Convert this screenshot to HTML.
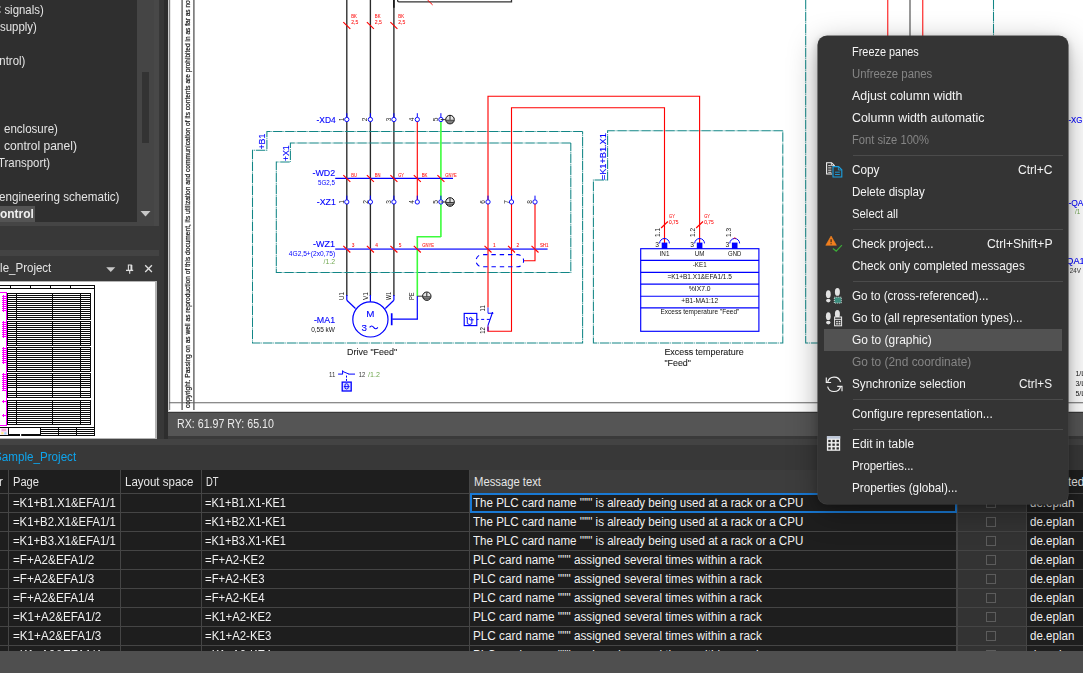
<!DOCTYPE html>
<html lang="en"><head><meta charset="utf-8"><title>EPLAN - Message management</title>
<style>
html,body{margin:0;padding:0;}
body{width:1083px;height:673px;overflow:hidden;position:relative;background:#383838;font-family:"Liberation Sans",sans-serif;}
.t{position:absolute;white-space:pre;transform-origin:0 0;font-family:"Liberation Sans",sans-serif;}
.a{position:absolute;}
svg{position:absolute;left:0;top:0;}
</style></head><body>
<div class="a" style="left:0px;top:0px;width:137px;height:222px;background:#2f2f2f;"></div>
<div class="a" style="left:137px;top:0px;width:17px;height:222px;background:#454545;"></div>
<div class="a" style="left:142.1px;top:72.1px;width:7px;height:70.7px;background:#333333;"></div>
<div class="a" style="left:0px;top:222px;width:159px;height:4px;background:#454545;"></div>
<div class="a" style="left:154px;top:0px;width:5px;height:226px;background:#484848;"></div>
<div class="a" style="left:0px;top:206px;width:35px;height:15.5px;background:#545454;"></div>
<svg class="a" style="left:139px;top:209px" width="13" height="9"><path d="M1.5 2 L11.5 2 L6.5 7.5 Z" fill="#c8c8c8"/></svg>
<div class="a" style="left:164px;top:0px;width:4px;height:439px;background:#2e2e2e;"></div>
<div class="a" style="left:0px;top:250.3px;width:159px;height:5.7px;background:#434343;"></div>
<div class="a" style="left:0px;top:280.6px;width:156.6px;height:158.2px;background:#b4b4b4;"></div>
<div class="a" style="left:0px;top:282px;width:154.5px;height:155.5px;background:#ffffff;"></div>
<div class="a" style="left:168px;top:0px;width:915px;height:412px;background:#d0d0d0;"></div>
<div class="a" style="left:169px;top:0px;width:914px;height:410.5px;background:#ffffff;"></div>
<div class="a" style="left:168px;top:412.5px;width:915px;height:23px;background:#555555;"></div>
<div class="a" style="left:164px;top:435.8px;width:919px;height:3.4px;background:#3a3a3a;"></div>
<div class="a" style="left:0px;top:439px;width:1083px;height:6.2px;background:#434343;"></div>
<div class="a" style="left:164px;top:435.8px;width:4px;height:3.2px;background:#2e2e2e;"></div>
<svg id="schematic" style="will-change:transform" width="1083" height="673" viewBox="0 0 1083 673" font-family="Liberation Sans, sans-serif"><defs><clipPath id="cv"><rect x="169" y="0" width="914" height="410.5"/></clipPath></defs>
<g clip-path="url(#cv)">
<line x1="169.6" y1="0" x2="169.6" y2="410" stroke="#8a8a8a" stroke-width="1.2" />
<line x1="182.1" y1="0" x2="182.1" y2="410" stroke="#555" stroke-width="1.3" />
<line x1="193.9" y1="0" x2="193.9" y2="410" stroke="#555" stroke-width="1.3" />
<line x1="169" y1="402.7" x2="1083" y2="402.7" stroke="#666" stroke-width="1.1" />
<text x="189.8" y="408" font-size="7.2" fill="#1a1a1a" textLength="439.2" lengthAdjust="spacingAndGlyphs" transform="rotate(-90 189.8 408)" stroke="#1a1a1a" stroke-width="0.22" >copyright. Passing on as well as reproduction of this document, its utilization and communication of its contents are prohibited in as far as not expressly</text>
<line x1="346.8" y1="0" x2="346.8" y2="296" stroke="#2a2a2a" stroke-width="1.35" />
<line x1="370.4" y1="0" x2="370.4" y2="296" stroke="#2a2a2a" stroke-width="1.35" />
<line x1="393.9" y1="0" x2="393.9" y2="296" stroke="#2a2a2a" stroke-width="1.35" />
<line x1="393.9" y1="0" x2="393.9" y2="7.8" stroke="#111" stroke-width="1.5" />
<path d="M397.6 0 V0.6 Q397.6 1.9 399 1.9 H511.5 V0" fill="none" stroke="#333" stroke-width="1.3"/>
<line x1="427.4" y1="-0.2" x2="432.6" y2="4.9" stroke="#ff0000" stroke-width="1.0" />
<line x1="343.3" y1="22.2" x2="350.3" y2="28.8" stroke="#ff0000" stroke-width="1.15" />
<text x="351.2" y="17.6" font-size="4.8" fill="#ff1010" textLength="5.7" lengthAdjust="spacingAndGlyphs" stroke="#ff1010" stroke-width="0.08" >BK</text>
<text x="351.2" y="23.8" font-size="4.8" fill="#ff1010" textLength="7" lengthAdjust="spacingAndGlyphs" stroke="#ff1010" stroke-width="0.08" >2,5</text>
<line x1="366.9" y1="22.2" x2="373.9" y2="28.8" stroke="#ff0000" stroke-width="1.15" />
<text x="374.79999999999995" y="17.6" font-size="4.8" fill="#ff1010" textLength="5.7" lengthAdjust="spacingAndGlyphs" stroke="#ff1010" stroke-width="0.08" >BK</text>
<text x="374.79999999999995" y="23.8" font-size="4.8" fill="#ff1010" textLength="7" lengthAdjust="spacingAndGlyphs" stroke="#ff1010" stroke-width="0.08" >2,5</text>
<line x1="390.4" y1="22.2" x2="397.4" y2="28.8" stroke="#ff0000" stroke-width="1.15" />
<text x="398.29999999999995" y="17.6" font-size="4.8" fill="#ff1010" textLength="5.7" lengthAdjust="spacingAndGlyphs" stroke="#ff1010" stroke-width="0.08" >BK</text>
<text x="398.29999999999995" y="23.8" font-size="4.8" fill="#ff1010" textLength="7" lengthAdjust="spacingAndGlyphs" stroke="#ff1010" stroke-width="0.08" >2,5</text>
<polyline points="582.6,131.5 266.9,131.5 266.9,150.2 252.5,150.2 252.5,342.9 582.6,342.9 582.6,131.5" fill="none" stroke="#128686" stroke-width="1.05" stroke-dasharray="9.5 0.85 0.8 0.85"/>
<polyline points="570.8,143 290.4,143 290.4,161.9 276.3,161.9 276.3,272.5 570.8,272.5 570.8,143" fill="none" stroke="#128686" stroke-width="1.05" stroke-dasharray="9.5 0.85 0.8 0.85"/>
<polyline points="782.8,130.8 607.6,130.8 607.6,180 593.4,180 593.4,342.9 782.8,342.9 782.8,130.8" fill="none" stroke="#128686" stroke-width="1.05" stroke-dasharray="9.5 0.85 0.8 0.85"/>
<polyline points="805.7,0 805.7,342.9 830,342.9" fill="none" stroke="#128686" stroke-width="1.05" stroke-dasharray="9.5 0.85 0.8 0.85"/>
<line x1="993.5" y1="0" x2="993.5" y2="40" stroke="#128686" stroke-width="1.05" stroke-dasharray="9.5 0.85 0.8 0.85"/>
<text x="265.2" y="149.6" font-size="9.6" fill="#0000ff" textLength="16" lengthAdjust="spacingAndGlyphs" transform="rotate(-90 265.2 149.6)" stroke="#0000ff" stroke-width="0.12" >+B1</text>
<text x="289" y="161.2" font-size="9.6" fill="#0000ff" textLength="16" lengthAdjust="spacingAndGlyphs" transform="rotate(-90 289 161.2)" stroke="#0000ff" stroke-width="0.12" >+X1</text>
<text x="606" y="180.2" font-size="9.6" fill="#0000ff" textLength="47" lengthAdjust="spacingAndGlyphs" transform="rotate(-90 606 180.2)" stroke="#0000ff" stroke-width="0.12" >=K1+B1.X1</text>
<line x1="887.7" y1="0" x2="887.7" y2="40" stroke="#ff4848" stroke-width="1.4" />
<line x1="922.7" y1="0" x2="922.7" y2="40" stroke="#ff4848" stroke-width="1.4" />
<line x1="910" y1="0" x2="910" y2="40" stroke="#444" stroke-width="1.1" />
<line x1="417.3" y1="119.5" x2="417.3" y2="201.5" stroke="#ff0000" stroke-width="1.12" />
<line x1="440.9" y1="119.5" x2="440.9" y2="237" stroke="#3cfc3c" stroke-width="1.6" />
<polyline points="440.9,236.8 417.3,236.8 417.3,296" fill="none" stroke="#3cfc3c" stroke-width="1.6" />
<polyline points="488.0,201.5 488.0,96.2 699.6,96.2 699.6,243" fill="none" stroke="#ff0000" stroke-width="1.12" />
<polyline points="511.5,201.5 511.5,107.7 664.5,107.7 664.5,243" fill="none" stroke="#ff0000" stroke-width="1.12" />
<line x1="488.0" y1="201.5" x2="488.0" y2="307.5" stroke="#ff0000" stroke-width="1.12" />
<polyline points="488.0,327 488.0,331.2 511.5,331.2 511.5,201.5" fill="none" stroke="#ff0000" stroke-width="1.12" />
<polyline points="535.0,201.5 535.0,260.7 523.3,260.7" fill="none" stroke="#ff0000" stroke-width="1.12" />
<text x="316.5" y="122.9" font-size="9.4" fill="#0000ff" textLength="19.2" lengthAdjust="spacingAndGlyphs" stroke="#0000ff" stroke-width="0.12" >-XD4</text>
<line x1="346.8" y1="113.2" x2="346.8" y2="117.2" stroke="#0000ff" stroke-width="1.0" />
<circle cx="346.8" cy="119.5" r="2.15" fill="#fff" stroke="#0000ff" stroke-width="0.95"/>
<text x="343.90000000000003" y="121.3" font-size="6.6" fill="#1a1a1a" transform="rotate(-90 343.90000000000003 121.3)" >1</text>
<line x1="370.4" y1="113.2" x2="370.4" y2="117.2" stroke="#0000ff" stroke-width="1.0" />
<circle cx="370.4" cy="119.5" r="2.15" fill="#fff" stroke="#0000ff" stroke-width="0.95"/>
<text x="367.5" y="121.3" font-size="6.6" fill="#1a1a1a" transform="rotate(-90 367.5 121.3)" >2</text>
<line x1="393.9" y1="113.2" x2="393.9" y2="117.2" stroke="#0000ff" stroke-width="1.0" />
<circle cx="393.9" cy="119.5" r="2.15" fill="#fff" stroke="#0000ff" stroke-width="0.95"/>
<text x="391.0" y="121.3" font-size="6.6" fill="#1a1a1a" transform="rotate(-90 391.0 121.3)" >3</text>
<line x1="417.3" y1="113.2" x2="417.3" y2="117.2" stroke="#0000ff" stroke-width="1.0" />
<circle cx="417.3" cy="119.5" r="2.15" fill="#fff" stroke="#0000ff" stroke-width="0.95"/>
<text x="414.40000000000003" y="121.3" font-size="6.6" fill="#1a1a1a" transform="rotate(-90 414.40000000000003 121.3)" >4</text>
<line x1="440.9" y1="113.2" x2="440.9" y2="117.2" stroke="#0000ff" stroke-width="1.0" />
<circle cx="440.9" cy="119.5" r="2.15" fill="#fff" stroke="#0000ff" stroke-width="0.95"/>
<text x="438.0" y="121.3" font-size="6.6" fill="#1a1a1a" transform="rotate(-90 438.0 121.3)" >5</text>
<line x1="440.7" y1="119.6" x2="445.7" y2="119.6" stroke="#222" stroke-width="0.9" />
<circle cx="450" cy="119.6" r="4.3" fill="#e4e4e4" stroke="#0a0a0a" stroke-width="1"/>
<path d="M446.0 119.69999999999999 A4.0 4.0 0 0 0 454.0 119.69999999999999 Z" fill="#3a3a3a"/>
<line x1="450" y1="115.89999999999999" x2="450" y2="119.8" stroke="#111" stroke-width="0.9" />
<line x1="446.9" y1="121.19999999999999" x2="453.1" y2="121.19999999999999" stroke="#ddd" stroke-width="0.6" />
<line x1="447.9" y1="122.6" x2="452.1" y2="122.6" stroke="#ddd" stroke-width="0.5" />
<text x="312.5" y="176.2" font-size="9.4" fill="#0000ff" textLength="22.6" lengthAdjust="spacingAndGlyphs" stroke="#0000ff" stroke-width="0.12" >-WD2</text>
<text x="318" y="185.2" font-size="6.8" fill="#0000ff" textLength="17" lengthAdjust="spacingAndGlyphs" >5G2,5</text>
<line x1="335.2" y1="178.4" x2="453" y2="178.4" stroke="#0000ff" stroke-width="1.25" />
<line x1="343.3" y1="175.1" x2="350.3" y2="181.8" stroke="#ff0000" stroke-width="1.15" />
<text x="351.2" y="176.7" font-size="4.8" fill="#ff1010" textLength="5.7" lengthAdjust="spacingAndGlyphs" stroke="#ff1010" stroke-width="0.08" >BU</text>
<line x1="366.9" y1="175.1" x2="373.9" y2="181.8" stroke="#ff0000" stroke-width="1.15" />
<text x="374.79999999999995" y="176.7" font-size="4.8" fill="#ff1010" textLength="5.7" lengthAdjust="spacingAndGlyphs" stroke="#ff1010" stroke-width="0.08" >BN</text>
<line x1="390.4" y1="175.1" x2="397.4" y2="181.8" stroke="#ff0000" stroke-width="1.15" />
<text x="398.29999999999995" y="176.7" font-size="4.8" fill="#ff1010" textLength="5.7" lengthAdjust="spacingAndGlyphs" stroke="#ff1010" stroke-width="0.08" >GY</text>
<line x1="413.8" y1="175.1" x2="420.8" y2="181.8" stroke="#ff0000" stroke-width="1.15" />
<text x="421.7" y="176.7" font-size="4.8" fill="#ff1010" textLength="5.7" lengthAdjust="spacingAndGlyphs" stroke="#ff1010" stroke-width="0.08" >BK</text>
<line x1="437.4" y1="175.1" x2="444.4" y2="181.8" stroke="#ff0000" stroke-width="1.15" />
<text x="445.29999999999995" y="176.7" font-size="4.8" fill="#ff1010" textLength="11.5" lengthAdjust="spacingAndGlyphs" stroke="#ff1010" stroke-width="0.08" >GNYE</text>
<text x="316.8" y="205" font-size="9.4" fill="#0000ff" textLength="19" lengthAdjust="spacingAndGlyphs" stroke="#0000ff" stroke-width="0.12" >-XZ1</text>
<line x1="346.8" y1="195.64999999999998" x2="346.8" y2="199.64999999999998" stroke="#0000ff" stroke-width="1.0" />
<circle cx="346.8" cy="201.95" r="2.15" fill="#fff" stroke="#0000ff" stroke-width="0.95"/>
<text x="343.90000000000003" y="203.75" font-size="6.6" fill="#1a1a1a" transform="rotate(-90 343.90000000000003 203.75)" >1</text>
<line x1="370.4" y1="195.64999999999998" x2="370.4" y2="199.64999999999998" stroke="#0000ff" stroke-width="1.0" />
<circle cx="370.4" cy="201.95" r="2.15" fill="#fff" stroke="#0000ff" stroke-width="0.95"/>
<text x="367.5" y="203.75" font-size="6.6" fill="#1a1a1a" transform="rotate(-90 367.5 203.75)" >2</text>
<line x1="393.9" y1="195.64999999999998" x2="393.9" y2="199.64999999999998" stroke="#0000ff" stroke-width="1.0" />
<circle cx="393.9" cy="201.95" r="2.15" fill="#fff" stroke="#0000ff" stroke-width="0.95"/>
<text x="391.0" y="203.75" font-size="6.6" fill="#1a1a1a" transform="rotate(-90 391.0 203.75)" >3</text>
<line x1="417.3" y1="195.64999999999998" x2="417.3" y2="199.64999999999998" stroke="#0000ff" stroke-width="1.0" />
<circle cx="417.3" cy="201.95" r="2.15" fill="#fff" stroke="#0000ff" stroke-width="0.95"/>
<text x="414.40000000000003" y="203.75" font-size="6.6" fill="#1a1a1a" transform="rotate(-90 414.40000000000003 203.75)" >4</text>
<line x1="440.9" y1="195.64999999999998" x2="440.9" y2="199.64999999999998" stroke="#0000ff" stroke-width="1.0" />
<circle cx="440.9" cy="201.95" r="2.15" fill="#fff" stroke="#0000ff" stroke-width="0.95"/>
<text x="438.0" y="203.75" font-size="6.6" fill="#1a1a1a" transform="rotate(-90 438.0 203.75)" >5</text>
<line x1="440.7" y1="202" x2="445.7" y2="202" stroke="#222" stroke-width="0.9" />
<circle cx="450" cy="202" r="4.3" fill="#e4e4e4" stroke="#0a0a0a" stroke-width="1"/>
<path d="M446.0 202.1 A4.0 4.0 0 0 0 454.0 202.1 Z" fill="#3a3a3a"/>
<line x1="450" y1="198.29999999999998" x2="450" y2="202.2" stroke="#111" stroke-width="0.9" />
<line x1="446.9" y1="203.6" x2="453.1" y2="203.6" stroke="#ddd" stroke-width="0.6" />
<line x1="447.9" y1="205" x2="452.1" y2="205" stroke="#ddd" stroke-width="0.5" />
<line x1="488.0" y1="195.64999999999998" x2="488.0" y2="199.64999999999998" stroke="#0000ff" stroke-width="1.0" />
<circle cx="488.0" cy="201.95" r="2.15" fill="#fff" stroke="#0000ff" stroke-width="0.95"/>
<text x="485.1" y="203.75" font-size="6.6" fill="#1a1a1a" transform="rotate(-90 485.1 203.75)" >6</text>
<line x1="511.5" y1="195.64999999999998" x2="511.5" y2="199.64999999999998" stroke="#0000ff" stroke-width="1.0" />
<circle cx="511.5" cy="201.95" r="2.15" fill="#fff" stroke="#0000ff" stroke-width="0.95"/>
<text x="508.6" y="203.75" font-size="6.6" fill="#1a1a1a" transform="rotate(-90 508.6 203.75)" >7</text>
<line x1="535.0" y1="195.64999999999998" x2="535.0" y2="199.64999999999998" stroke="#0000ff" stroke-width="1.0" />
<circle cx="535.0" cy="201.95" r="2.15" fill="#fff" stroke="#0000ff" stroke-width="0.95"/>
<text x="532.1" y="203.75" font-size="6.6" fill="#1a1a1a" transform="rotate(-90 532.1 203.75)" >8</text>
<text x="313" y="247.3" font-size="9.4" fill="#0000ff" textLength="22" lengthAdjust="spacingAndGlyphs" stroke="#0000ff" stroke-width="0.12" >-WZ1</text>
<text x="288.8" y="256.2" font-size="6.8" fill="#0000ff" textLength="46.3" lengthAdjust="spacingAndGlyphs" >4G2,5+(2x0,75)</text>
<text x="323.6" y="263.5" font-size="7" fill="#70a850" textLength="11.5" lengthAdjust="spacingAndGlyphs" >/1.2</text>
<line x1="335.2" y1="249.1" x2="547.6" y2="249.1" stroke="#5555ff" stroke-width="1.8" />
<line x1="343.3" y1="245.8" x2="350.3" y2="252.5" stroke="#ff0000" stroke-width="1.15" />
<text x="351.7" y="246.9" font-size="4.8" fill="#ff1010" stroke="#ff1010" stroke-width="0.08" >3</text>
<line x1="366.9" y1="245.8" x2="373.9" y2="252.5" stroke="#ff0000" stroke-width="1.15" />
<text x="375.29999999999995" y="246.9" font-size="4.8" fill="#ff1010" stroke="#ff1010" stroke-width="0.08" >4</text>
<line x1="390.4" y1="245.8" x2="397.4" y2="252.5" stroke="#ff0000" stroke-width="1.15" />
<text x="398.79999999999995" y="246.9" font-size="4.8" fill="#ff1010" stroke="#ff1010" stroke-width="0.08" >5</text>
<line x1="413.8" y1="245.8" x2="420.8" y2="252.5" stroke="#ff0000" stroke-width="1.15" />
<text x="422.2" y="246.9" font-size="4.8" fill="#ff1010" textLength="11.8" lengthAdjust="spacingAndGlyphs" stroke="#ff1010" stroke-width="0.08" >GNYE</text>
<line x1="484.5" y1="245.8" x2="491.5" y2="252.5" stroke="#ff0000" stroke-width="1.15" />
<text x="492.9" y="246.9" font-size="4.8" fill="#ff1010" stroke="#ff1010" stroke-width="0.08" >1</text>
<line x1="508.0" y1="245.8" x2="515.0" y2="252.5" stroke="#ff0000" stroke-width="1.15" />
<text x="516.4" y="246.9" font-size="4.8" fill="#ff1010" stroke="#ff1010" stroke-width="0.08" >2</text>
<line x1="531.5" y1="245.8" x2="538.5" y2="252.5" stroke="#ff0000" stroke-width="1.15" />
<text x="539.9" y="246.9" font-size="4.8" fill="#ff1010" textLength="8.6" lengthAdjust="spacingAndGlyphs" stroke="#ff1010" stroke-width="0.08" >SH1</text>
<rect x="476" y="254.6" width="47.6" height="12.2" rx="6.1" fill="none" stroke="#0000ff" stroke-width="1.05" stroke-dasharray="4.4 3.9" stroke-dashoffset="-1"/>
<text x="344.1" y="300" font-size="7" fill="#141414" textLength="8" lengthAdjust="spacingAndGlyphs" transform="rotate(-90 344.1 300)" >U1</text>
<text x="367.7" y="300" font-size="7" fill="#141414" textLength="8" lengthAdjust="spacingAndGlyphs" transform="rotate(-90 367.7 300)" >V1</text>
<text x="391.2" y="300" font-size="7" fill="#141414" textLength="8" lengthAdjust="spacingAndGlyphs" transform="rotate(-90 391.2 300)" >W1</text>
<line x1="346.8" y1="295" x2="346.8" y2="300.3" stroke="#0000ff" stroke-width="1.2" />
<line x1="346.8" y1="300.3" x2="355.5" y2="308.5" stroke="#0000ff" stroke-width="1.2" />
<line x1="370.4" y1="295" x2="370.4" y2="302" stroke="#0000ff" stroke-width="1.2" />
<line x1="393.9" y1="295" x2="393.9" y2="300.3" stroke="#0000ff" stroke-width="1.2" />
<line x1="393.9" y1="300.3" x2="385.3" y2="308.5" stroke="#0000ff" stroke-width="1.2" />
<circle cx="370.4" cy="319.4" r="17.6" fill="#fff" stroke="#0000ff" stroke-width="1.2"/>
<text x="370.4" y="316.7" font-size="9.8" fill="#0000ff" text-anchor="middle" stroke="#0000ff" stroke-width="0.1" >M</text>
<text x="364.2" y="330.9" font-size="9.8" fill="#0000ff" text-anchor="middle" stroke="#0000ff" stroke-width="0.1" >3</text>
<path d="M369.6 327.4 q2 -2.8 4.1 0 t4.1 0" fill="none" stroke="#0000ff" stroke-width="1.1"/>
<text x="414" y="300.1" font-size="7" fill="#141414" textLength="7.6" lengthAdjust="spacingAndGlyphs" transform="rotate(-90 414 300.1)" >PE</text>
<line x1="417.3" y1="296" x2="417.3" y2="319.2" stroke="#0000ff" stroke-width="1.2" />
<line x1="417.6" y1="296.2" x2="422.6" y2="296.2" stroke="#222" stroke-width="0.9" />
<circle cx="426.8" cy="296.2" r="4.2" fill="#e4e4e4" stroke="#0a0a0a" stroke-width="1"/>
<path d="M422.90000000000003 296.3 A3.9000000000000004 3.9000000000000004 0 0 0 430.7 296.3 Z" fill="#3a3a3a"/>
<line x1="426.8" y1="292.6" x2="426.8" y2="296.4" stroke="#111" stroke-width="0.9" />
<line x1="423.8" y1="297.8" x2="429.8" y2="297.8" stroke="#ddd" stroke-width="0.6" />
<line x1="424.8" y1="299.2" x2="428.8" y2="299.2" stroke="#ddd" stroke-width="0.5" />
<line x1="392.3" y1="319.2" x2="417.9" y2="319.2" stroke="#0000ff" stroke-width="1.2" />
<line x1="391.7" y1="313.2" x2="391.7" y2="325.2" stroke="#0000ff" stroke-width="1.7" />
<text x="313.9" y="322.6" font-size="9.4" fill="#0000ff" textLength="21.2" lengthAdjust="spacingAndGlyphs" stroke="#0000ff" stroke-width="0.12" >-MA1</text>
<text x="311.2" y="331.9" font-size="7.2" fill="#141414" textLength="23.8" lengthAdjust="spacingAndGlyphs" >0,55 kW</text>
<text x="347.1" y="354.7" font-size="9.2" fill="#1c1c1c" textLength="50.1" lengthAdjust="spacingAndGlyphs" stroke="#1c1c1c" stroke-width="0.1" >Drive &quot;Feed&quot;</text>
<text x="329" y="376.9" font-size="6.4" fill="#333" textLength="6.3" lengthAdjust="spacingAndGlyphs" >11</text>
<text x="358.8" y="376.9" font-size="6.4" fill="#333" textLength="6.5" lengthAdjust="spacingAndGlyphs" >12</text>
<text x="368.1" y="376.9" font-size="6.4" fill="#70a850" textLength="11.9" lengthAdjust="spacingAndGlyphs" >/1.2</text>
<line x1="338.1" y1="374.1" x2="342.8" y2="374.1" stroke="#0000ff" stroke-width="1.0" />
<line x1="342.6" y1="370.4" x2="342.6" y2="374.1" stroke="#0000ff" stroke-width="1.0" />
<line x1="342.6" y1="371.4" x2="349" y2="374.1" stroke="#0000ff" stroke-width="1.0" />
<line x1="348.6" y1="374.1" x2="355" y2="374.1" stroke="#0000ff" stroke-width="1.0" />
<line x1="346.5" y1="375.6" x2="346.5" y2="382" stroke="#0000ff" stroke-width="1.0" stroke-dasharray="2 1.3"/>
<rect x="342.2" y="382.1" width="9" height="8.9" fill="#dfe0ff" stroke="#0000ff" stroke-width="1.3"/>
<path d="M343.8 386.6 h5.8 M345 384.3 q1.8 -1.3 3.2 0.2 v3.8 q-1.6 1.5 -3.2 0 z" fill="none" stroke="#0000ff" stroke-width="0.9"/>
<rect x="464.2" y="313.4" width="12.6" height="12.2" fill="#fff" stroke="#0000ff" stroke-width="1.15"/>
<path d="M466 317.6 h1.3 v6 q2.4 2 4.6 0 v-5.4 q-1.4 -1.6 -2.6 0 q-0.5 1.4 1.2 1.6 h3.2" fill="none" stroke="#0000ff" stroke-width="0.95"/>
<line x1="477" y1="319.4" x2="490" y2="319.4" stroke="#0000ff" stroke-width="1.0" stroke-dasharray="1.6 2.6 3 2.6 3 9"/>
<text x="485.4" y="311.4" font-size="7" fill="#141414" textLength="6.4" lengthAdjust="spacingAndGlyphs" transform="rotate(-90 485.4 311.4)" >11</text>
<text x="485.4" y="333.8" font-size="7" fill="#141414" textLength="6.8" lengthAdjust="spacingAndGlyphs" transform="rotate(-90 485.4 333.8)" >12</text>
<line x1="488.0" y1="307.5" x2="488.0" y2="313.3" stroke="#5050ff" stroke-width="1.3" />
<polyline points="488.0,313.3 493.4,313.3" fill="none" stroke="#0000ff" stroke-width="1.1" />
<line x1="492.4" y1="312" x2="492.4" y2="313.6" stroke="#0000ff" stroke-width="1.1" />
<line x1="492.5" y1="312.5" x2="487.9" y2="325.6" stroke="#0000ff" stroke-width="1.1" />
<line x1="488.0" y1="325.4" x2="488.0" y2="331.2" stroke="#6010c0" stroke-width="1.3" />
<rect x="640.7" y="248.7" width="118.2" height="82.6" fill="#fff" stroke="#0000ff" stroke-width="1.15"/>
<line x1="640.7" y1="260.3" x2="758.9" y2="260.3" stroke="#0000ff" stroke-width="1.15" />
<line x1="640.7" y1="272.3" x2="758.9" y2="272.3" stroke="#0000ff" stroke-width="1.15" />
<line x1="640.7" y1="284.1" x2="758.9" y2="284.1" stroke="#0000ff" stroke-width="1.15" />
<line x1="640.7" y1="296.2" x2="758.9" y2="296.2" stroke="#0000ff" stroke-width="1.15" />
<line x1="640.7" y1="307.9" x2="758.9" y2="307.9" stroke="#0000ff" stroke-width="1.15" />
<rect x="661.7" y="242.6" width="5.6" height="6.2" fill="#0000ff"/>
<path d="M659.6 243.4 a4.9 4.9 0 0 1 9.8 0" fill="none" stroke="#0000ff" stroke-width="1"/>
<text x="664.5" y="256.2" font-size="6.7" fill="#141414" text-anchor="middle" textLength="9.9" lengthAdjust="spacingAndGlyphs" >IN1</text>
<text x="657.1" y="247.4" font-size="6.7" fill="#141414" text-anchor="middle" >3</text>
<text x="660.3" y="237" font-size="6.7" fill="#141414" textLength="9" lengthAdjust="spacingAndGlyphs" transform="rotate(-90 660.3 237)" >1.1</text>
<rect x="696.8000000000001" y="242.6" width="5.6" height="6.2" fill="#0000ff"/>
<path d="M694.7 243.4 a4.9 4.9 0 0 1 9.8 0" fill="none" stroke="#0000ff" stroke-width="1"/>
<text x="699.6" y="256.2" font-size="6.7" fill="#141414" text-anchor="middle" textLength="9.6" lengthAdjust="spacingAndGlyphs" >UM</text>
<text x="692.2" y="247.4" font-size="6.7" fill="#141414" text-anchor="middle" >3</text>
<text x="695.4" y="237" font-size="6.7" fill="#141414" textLength="9" lengthAdjust="spacingAndGlyphs" transform="rotate(-90 695.4 237)" >1.2</text>
<rect x="731.9000000000001" y="242.6" width="5.6" height="6.2" fill="#0000ff"/>
<path d="M729.8000000000001 243.4 a4.9 4.9 0 0 1 9.8 0" fill="none" stroke="#0000ff" stroke-width="1"/>
<text x="734.7" y="256.2" font-size="6.7" fill="#141414" text-anchor="middle" textLength="13.2" lengthAdjust="spacingAndGlyphs" >GND</text>
<text x="727.3000000000001" y="247.4" font-size="6.7" fill="#141414" text-anchor="middle" >3</text>
<text x="730.5" y="237" font-size="6.7" fill="#141414" textLength="9" lengthAdjust="spacingAndGlyphs" transform="rotate(-90 730.5 237)" >1.3</text>
<line x1="661.1" y1="228" x2="667.9" y2="221.5" stroke="#ff0000" stroke-width="1.15" />
<text x="669.1" y="217.5" font-size="4.8" fill="#ff1010" textLength="5.7" lengthAdjust="spacingAndGlyphs" stroke="#ff1010" stroke-width="0.08" >GY</text>
<text x="669.1" y="223.7" font-size="4.8" fill="#ff1010" textLength="9.4" lengthAdjust="spacingAndGlyphs" stroke="#ff1010" stroke-width="0.08" >0,75</text>
<line x1="696.2" y1="228" x2="703.0" y2="221.5" stroke="#ff0000" stroke-width="1.15" />
<text x="704.2" y="217.5" font-size="4.8" fill="#ff1010" textLength="5.7" lengthAdjust="spacingAndGlyphs" stroke="#ff1010" stroke-width="0.08" >GY</text>
<text x="704.2" y="223.7" font-size="4.8" fill="#ff1010" textLength="9.4" lengthAdjust="spacingAndGlyphs" stroke="#ff1010" stroke-width="0.08" >0,75</text>
<path d="M733.5 238.7 l1.3 -1 l1.3 1" fill="none" stroke="#ff0000" stroke-width="0.8"/>
<text x="699.7" y="266.9" font-size="6.7" fill="#141414" text-anchor="middle" textLength="13.8" lengthAdjust="spacingAndGlyphs" >-KE1</text>
<text x="699.7" y="279" font-size="6.7" fill="#141414" text-anchor="middle" textLength="64.5" lengthAdjust="spacingAndGlyphs" >=K1+B1.X1&amp;EFA1/1.5</text>
<text x="699.7" y="290.9" font-size="6.7" fill="#141414" text-anchor="middle" textLength="21.8" lengthAdjust="spacingAndGlyphs" >%IX7.0</text>
<text x="699.7" y="302.9" font-size="6.7" fill="#141414" text-anchor="middle" textLength="36.8" lengthAdjust="spacingAndGlyphs" >+B1-MA1:12</text>
<text x="699.9" y="314" font-size="6.7" fill="#141414" text-anchor="middle" textLength="78.8" lengthAdjust="spacingAndGlyphs" >Excess temperature &quot;Feed&quot;</text>
<text x="664.4" y="354.8" font-size="9.2" fill="#1c1c1c" textLength="79.3" lengthAdjust="spacingAndGlyphs" stroke="#1c1c1c" stroke-width="0.1" >Excess temperature</text>
<text x="664.4" y="365.7" font-size="9.2" fill="#1c1c1c" textLength="26.5" lengthAdjust="spacingAndGlyphs" stroke="#1c1c1c" stroke-width="0.1" >&quot;Feed&quot;</text>
<text x="1068.4" y="122.9" font-size="9.4" fill="#0000ff" textLength="14" lengthAdjust="spacingAndGlyphs" stroke="#0000ff" stroke-width="0.12" >-XG</text>
<text x="1068.4" y="205.5" font-size="9.4" fill="#0000ff" textLength="15" lengthAdjust="spacingAndGlyphs" stroke="#0000ff" stroke-width="0.12" >-QA</text>
<text x="1075" y="213.6" font-size="6.4" fill="#70a850" >/1</text>
<text x="1063.2" y="264.2" font-size="9.4" fill="#0000ff" textLength="21.5" lengthAdjust="spacingAndGlyphs" stroke="#0000ff" stroke-width="0.12" >-QA1</text>
<text x="1066.3" y="272.8" font-size="6.3" fill="#333" textLength="14.5" lengthAdjust="spacingAndGlyphs" >/ 24V</text>
<text x="1075.4" y="376.4" font-size="7" fill="#141414" >1/L</text>
<text x="1075.4" y="385.6" font-size="7" fill="#141414" >3/L</text>
<text x="1075.4" y="396" font-size="7" fill="#141414" >5/L</text>
</g>
<g><rect x="0" y="285" width="95" height="1" fill="#0a0a0a" shape-rendering="crispEdges"/><rect x="94" y="285" width="1" height="151" fill="#0a0a0a" shape-rendering="crispEdges"/><rect x="0" y="435" width="95" height="1" fill="#0a0a0a" shape-rendering="crispEdges"/><rect x="0" y="288" width="95" height="1" fill="#0a0a0a" shape-rendering="crispEdges"/><rect x="10" y="285" width="1" height="3" fill="#0a0a0a" shape-rendering="crispEdges"/><rect x="30" y="285" width="1" height="3" fill="#0a0a0a" shape-rendering="crispEdges"/><rect x="50" y="285" width="1" height="3" fill="#0a0a0a" shape-rendering="crispEdges"/><rect x="70" y="285" width="1" height="3" fill="#0a0a0a" shape-rendering="crispEdges"/><rect x="7" y="293" width="84" height="1" fill="#0a0a0a" shape-rendering="crispEdges"/><rect x="7" y="295" width="84" height="1" fill="#0a0a0a" shape-rendering="crispEdges"/><rect x="7" y="297" width="84" height="1" fill="#0a0a0a" shape-rendering="crispEdges"/><rect x="7" y="299" width="84" height="1" fill="#0a0a0a" shape-rendering="crispEdges"/><rect x="7" y="301" width="84" height="1" fill="#0a0a0a" shape-rendering="crispEdges"/><rect x="7" y="303" width="84" height="1" fill="#0a0a0a" shape-rendering="crispEdges"/><rect x="7" y="305" width="84" height="1" fill="#0a0a0a" shape-rendering="crispEdges"/><rect x="7" y="307" width="84" height="1" fill="#0a0a0a" shape-rendering="crispEdges"/><rect x="7" y="309" width="84" height="1" fill="#0a0a0a" shape-rendering="crispEdges"/><rect x="7" y="311" width="84" height="1" fill="#0a0a0a" shape-rendering="crispEdges"/><rect x="7" y="313" width="84" height="1" fill="#0a0a0a" shape-rendering="crispEdges"/><rect x="7" y="315" width="84" height="1" fill="#0a0a0a" shape-rendering="crispEdges"/><rect x="7" y="317" width="84" height="1" fill="#0a0a0a" shape-rendering="crispEdges"/><rect x="7" y="319" width="84" height="1" fill="#0a0a0a" shape-rendering="crispEdges"/><rect x="7" y="293" width="1" height="27" fill="#0a0a0a" shape-rendering="crispEdges"/><rect x="16" y="293" width="1" height="27" fill="#0a0a0a" shape-rendering="crispEdges"/><rect x="52" y="293" width="1" height="27" fill="#0a0a0a" shape-rendering="crispEdges"/><rect x="80" y="293" width="1" height="27" fill="#0a0a0a" shape-rendering="crispEdges"/><rect x="90" y="293" width="1" height="27" fill="#0a0a0a" shape-rendering="crispEdges"/><rect x="7" y="321" width="84" height="1" fill="#0a0a0a" shape-rendering="crispEdges"/><rect x="7" y="323" width="84" height="1" fill="#0a0a0a" shape-rendering="crispEdges"/><rect x="7" y="325" width="84" height="1" fill="#0a0a0a" shape-rendering="crispEdges"/><rect x="7" y="327" width="84" height="1" fill="#0a0a0a" shape-rendering="crispEdges"/><rect x="7" y="329" width="84" height="1" fill="#0a0a0a" shape-rendering="crispEdges"/><rect x="7" y="331" width="84" height="1" fill="#0a0a0a" shape-rendering="crispEdges"/><rect x="7" y="333" width="84" height="1" fill="#0a0a0a" shape-rendering="crispEdges"/><rect x="7" y="335" width="84" height="1" fill="#0a0a0a" shape-rendering="crispEdges"/><rect x="7" y="337" width="84" height="1" fill="#0a0a0a" shape-rendering="crispEdges"/><rect x="7" y="339" width="84" height="1" fill="#0a0a0a" shape-rendering="crispEdges"/><rect x="7" y="341" width="84" height="1" fill="#0a0a0a" shape-rendering="crispEdges"/><rect x="7" y="343" width="84" height="1" fill="#0a0a0a" shape-rendering="crispEdges"/><rect x="7" y="345" width="84" height="1" fill="#0a0a0a" shape-rendering="crispEdges"/><rect x="7" y="321" width="1" height="25" fill="#0a0a0a" shape-rendering="crispEdges"/><rect x="16" y="321" width="1" height="25" fill="#0a0a0a" shape-rendering="crispEdges"/><rect x="52" y="321" width="1" height="25" fill="#0a0a0a" shape-rendering="crispEdges"/><rect x="80" y="321" width="1" height="25" fill="#0a0a0a" shape-rendering="crispEdges"/><rect x="90" y="321" width="1" height="25" fill="#0a0a0a" shape-rendering="crispEdges"/><rect x="7" y="347" width="84" height="1" fill="#0a0a0a" shape-rendering="crispEdges"/><rect x="7" y="349" width="84" height="1" fill="#0a0a0a" shape-rendering="crispEdges"/><rect x="7" y="351" width="84" height="1" fill="#0a0a0a" shape-rendering="crispEdges"/><rect x="7" y="353" width="84" height="1" fill="#0a0a0a" shape-rendering="crispEdges"/><rect x="7" y="355" width="84" height="1" fill="#0a0a0a" shape-rendering="crispEdges"/><rect x="7" y="357" width="84" height="1" fill="#0a0a0a" shape-rendering="crispEdges"/><rect x="7" y="359" width="84" height="1" fill="#0a0a0a" shape-rendering="crispEdges"/><rect x="7" y="361" width="84" height="1" fill="#0a0a0a" shape-rendering="crispEdges"/><rect x="7" y="363" width="84" height="1" fill="#0a0a0a" shape-rendering="crispEdges"/><rect x="7" y="365" width="84" height="1" fill="#0a0a0a" shape-rendering="crispEdges"/><rect x="7" y="367" width="84" height="1" fill="#0a0a0a" shape-rendering="crispEdges"/><rect x="7" y="369" width="84" height="1" fill="#0a0a0a" shape-rendering="crispEdges"/><rect x="7" y="371" width="84" height="1" fill="#0a0a0a" shape-rendering="crispEdges"/><rect x="7" y="347" width="1" height="25" fill="#0a0a0a" shape-rendering="crispEdges"/><rect x="16" y="347" width="1" height="25" fill="#0a0a0a" shape-rendering="crispEdges"/><rect x="52" y="347" width="1" height="25" fill="#0a0a0a" shape-rendering="crispEdges"/><rect x="80" y="347" width="1" height="25" fill="#0a0a0a" shape-rendering="crispEdges"/><rect x="90" y="347" width="1" height="25" fill="#0a0a0a" shape-rendering="crispEdges"/><rect x="7" y="373" width="84" height="1" fill="#0a0a0a" shape-rendering="crispEdges"/><rect x="7" y="375" width="84" height="1" fill="#0a0a0a" shape-rendering="crispEdges"/><rect x="7" y="377" width="84" height="1" fill="#0a0a0a" shape-rendering="crispEdges"/><rect x="7" y="379" width="84" height="1" fill="#0a0a0a" shape-rendering="crispEdges"/><rect x="7" y="381" width="84" height="1" fill="#0a0a0a" shape-rendering="crispEdges"/><rect x="7" y="383" width="84" height="1" fill="#0a0a0a" shape-rendering="crispEdges"/><rect x="7" y="385" width="84" height="1" fill="#0a0a0a" shape-rendering="crispEdges"/><rect x="7" y="387" width="84" height="1" fill="#0a0a0a" shape-rendering="crispEdges"/><rect x="7" y="391" width="84" height="1" fill="#0a0a0a" shape-rendering="crispEdges"/><rect x="7" y="393" width="84" height="1" fill="#0a0a0a" shape-rendering="crispEdges"/><rect x="7" y="395" width="84" height="1" fill="#0a0a0a" shape-rendering="crispEdges"/><rect x="7" y="397" width="84" height="1" fill="#0a0a0a" shape-rendering="crispEdges"/><rect x="7" y="373" width="1" height="25" fill="#0a0a0a" shape-rendering="crispEdges"/><rect x="16" y="373" width="1" height="25" fill="#0a0a0a" shape-rendering="crispEdges"/><rect x="52" y="373" width="1" height="25" fill="#0a0a0a" shape-rendering="crispEdges"/><rect x="80" y="373" width="1" height="25" fill="#0a0a0a" shape-rendering="crispEdges"/><rect x="90" y="373" width="1" height="25" fill="#0a0a0a" shape-rendering="crispEdges"/><rect x="7" y="400" width="84" height="1" fill="#0a0a0a" shape-rendering="crispEdges"/><rect x="7" y="402" width="84" height="1" fill="#0a0a0a" shape-rendering="crispEdges"/><rect x="7" y="404" width="84" height="1" fill="#0a0a0a" shape-rendering="crispEdges"/><rect x="7" y="406" width="84" height="1" fill="#0a0a0a" shape-rendering="crispEdges"/><rect x="7" y="408" width="84" height="1" fill="#0a0a0a" shape-rendering="crispEdges"/><rect x="7" y="410" width="84" height="1" fill="#0a0a0a" shape-rendering="crispEdges"/><rect x="7" y="412" width="84" height="1" fill="#0a0a0a" shape-rendering="crispEdges"/><rect x="7" y="414" width="84" height="1" fill="#0a0a0a" shape-rendering="crispEdges"/><rect x="7" y="416" width="84" height="1" fill="#0a0a0a" shape-rendering="crispEdges"/><rect x="7" y="418" width="84" height="1" fill="#0a0a0a" shape-rendering="crispEdges"/><rect x="7" y="420" width="84" height="1" fill="#0a0a0a" shape-rendering="crispEdges"/><rect x="7" y="422" width="84" height="1" fill="#0a0a0a" shape-rendering="crispEdges"/><rect x="7" y="424" width="84" height="1" fill="#0a0a0a" shape-rendering="crispEdges"/><rect x="7" y="400" width="1" height="25" fill="#0a0a0a" shape-rendering="crispEdges"/><rect x="16" y="400" width="1" height="25" fill="#0a0a0a" shape-rendering="crispEdges"/><rect x="52" y="400" width="1" height="25" fill="#0a0a0a" shape-rendering="crispEdges"/><rect x="80" y="400" width="1" height="25" fill="#0a0a0a" shape-rendering="crispEdges"/><rect x="90" y="400" width="1" height="25" fill="#0a0a0a" shape-rendering="crispEdges"/><rect x="6" y="292" width="1" height="134" fill="#ff00ff" shape-rendering="crispEdges"/><rect x="0" y="292" width="7" height="1" fill="#ff00ff" shape-rendering="crispEdges"/><rect x="0" y="425" width="7" height="1" fill="#ff00ff" shape-rendering="crispEdges"/><rect x="3" y="295" width="1" height="17" fill="#ff00ff" shape-rendering="crispEdges"/><rect x="2" y="296" width="4" height="1" fill="#ff00ff" shape-rendering="crispEdges"/><rect x="2" y="298" width="4" height="1" fill="#ff00ff" shape-rendering="crispEdges"/><rect x="2" y="300" width="4" height="1" fill="#ff00ff" shape-rendering="crispEdges"/><rect x="2" y="302" width="4" height="1" fill="#ff00ff" shape-rendering="crispEdges"/><rect x="2" y="304" width="4" height="1" fill="#ff00ff" shape-rendering="crispEdges"/><rect x="2" y="306" width="4" height="1" fill="#ff00ff" shape-rendering="crispEdges"/><rect x="2" y="308" width="4" height="1" fill="#ff00ff" shape-rendering="crispEdges"/><rect x="2" y="310" width="4" height="1" fill="#ff00ff" shape-rendering="crispEdges"/><rect x="3" y="321" width="1" height="17" fill="#ff00ff" shape-rendering="crispEdges"/><rect x="2" y="322" width="4" height="1" fill="#ff00ff" shape-rendering="crispEdges"/><rect x="2" y="324" width="4" height="1" fill="#ff00ff" shape-rendering="crispEdges"/><rect x="2" y="326" width="4" height="1" fill="#ff00ff" shape-rendering="crispEdges"/><rect x="2" y="328" width="4" height="1" fill="#ff00ff" shape-rendering="crispEdges"/><rect x="2" y="330" width="4" height="1" fill="#ff00ff" shape-rendering="crispEdges"/><rect x="2" y="332" width="4" height="1" fill="#ff00ff" shape-rendering="crispEdges"/><rect x="2" y="334" width="4" height="1" fill="#ff00ff" shape-rendering="crispEdges"/><rect x="2" y="336" width="4" height="1" fill="#ff00ff" shape-rendering="crispEdges"/><rect x="3" y="347" width="1" height="17" fill="#ff00ff" shape-rendering="crispEdges"/><rect x="2" y="348" width="4" height="1" fill="#ff00ff" shape-rendering="crispEdges"/><rect x="2" y="350" width="4" height="1" fill="#ff00ff" shape-rendering="crispEdges"/><rect x="2" y="352" width="4" height="1" fill="#ff00ff" shape-rendering="crispEdges"/><rect x="2" y="354" width="4" height="1" fill="#ff00ff" shape-rendering="crispEdges"/><rect x="2" y="356" width="4" height="1" fill="#ff00ff" shape-rendering="crispEdges"/><rect x="2" y="358" width="4" height="1" fill="#ff00ff" shape-rendering="crispEdges"/><rect x="2" y="360" width="4" height="1" fill="#ff00ff" shape-rendering="crispEdges"/><rect x="2" y="362" width="4" height="1" fill="#ff00ff" shape-rendering="crispEdges"/><rect x="3" y="373" width="1" height="18" fill="#ff00ff" shape-rendering="crispEdges"/><rect x="2" y="374" width="4" height="1" fill="#ff00ff" shape-rendering="crispEdges"/><rect x="2" y="376" width="4" height="1" fill="#ff00ff" shape-rendering="crispEdges"/><rect x="2" y="378" width="4" height="1" fill="#ff00ff" shape-rendering="crispEdges"/><rect x="2" y="380" width="4" height="1" fill="#ff00ff" shape-rendering="crispEdges"/><rect x="2" y="382" width="4" height="1" fill="#ff00ff" shape-rendering="crispEdges"/><rect x="2" y="384" width="4" height="1" fill="#ff00ff" shape-rendering="crispEdges"/><rect x="2" y="386" width="4" height="1" fill="#ff00ff" shape-rendering="crispEdges"/><rect x="2" y="388" width="4" height="1" fill="#ff00ff" shape-rendering="crispEdges"/><rect x="2" y="390" width="4" height="1" fill="#ff00ff" shape-rendering="crispEdges"/><rect x="2" y="401" width="4" height="1" fill="#ff00ff" shape-rendering="crispEdges"/><rect x="3" y="400" width="1" height="3" fill="#ff00ff" shape-rendering="crispEdges"/><rect x="2" y="415" width="4" height="1" fill="#ff00ff" shape-rendering="crispEdges"/><rect x="3" y="414" width="1" height="3" fill="#ff00ff" shape-rendering="crispEdges"/><rect x="0" y="427" width="95" height="1" fill="#0a0a0a" shape-rendering="crispEdges"/><rect x="8" y="427" width="1" height="9" fill="#0a0a0a" shape-rendering="crispEdges"/><rect x="40" y="427" width="1" height="9" fill="#0a0a0a" shape-rendering="crispEdges"/><rect x="58" y="427" width="1" height="9" fill="#0a0a0a" shape-rendering="crispEdges"/><rect x="76" y="427" width="1" height="9" fill="#0a0a0a" shape-rendering="crispEdges"/><rect x="40" y="429" width="55" height="1" fill="#0a0a0a" shape-rendering="crispEdges"/><rect x="40" y="431" width="55" height="1" fill="#0a0a0a" shape-rendering="crispEdges"/><rect x="40" y="433" width="55" height="1" fill="#0a0a0a" shape-rendering="crispEdges"/><rect x="8" y="434" width="13" height="1" fill="#0a0a0a" shape-rendering="crispEdges"/><rect x="21" y="434" width="19" height="1" fill="#0a0a0a" shape-rendering="crispEdges"/><rect x="20" y="434" width="1.2" height="2" fill="#fff"/><rect x="0.6" y="428.3" width="7" height="6.6" fill="#fbe3f3"/><rect x="1.6" y="428.8" width="4.4" height="2.4" fill="#f3a6d8"/><rect x="1.3" y="432.2" width="2" height="2" fill="#fff27a"/><rect x="4.4" y="432.4" width="2" height="2" fill="#8fd8ff"/></g></svg>
<div class="a" style="left:0px;top:469.6px;width:1083px;height:181.4px;background:#1e1e1e;"></div>
<div class="a" style="left:470px;top:469.6px;width:487px;height:23.4px;background:#3d3d3d;"></div>
<div class="a" style="left:957px;top:493px;width:70px;height:158px;background:#333333;"></div>
<div class="a" style="left:0px;top:492.7px;width:1083px;height:1.3px;background:#454545;"></div>
<div class="a" style="left:0px;top:511.7px;width:1083px;height:1.3px;background:#454545;"></div>
<div class="a" style="left:0px;top:530.7px;width:1083px;height:1.3px;background:#454545;"></div>
<div class="a" style="left:0px;top:549.7px;width:1083px;height:1.3px;background:#454545;"></div>
<div class="a" style="left:0px;top:568.7px;width:1083px;height:1.3px;background:#454545;"></div>
<div class="a" style="left:0px;top:587.7px;width:1083px;height:1.3px;background:#454545;"></div>
<div class="a" style="left:0px;top:606.7px;width:1083px;height:1.3px;background:#454545;"></div>
<div class="a" style="left:0px;top:625.7px;width:1083px;height:1.3px;background:#454545;"></div>
<div class="a" style="left:0px;top:644.7px;width:1083px;height:1.3px;background:#454545;"></div>
<div class="a" style="left:8px;top:469.6px;width:1.3px;height:181.4px;background:#454545;"></div>
<div class="a" style="left:120px;top:469.6px;width:1.3px;height:181.4px;background:#454545;"></div>
<div class="a" style="left:201px;top:469.6px;width:1.3px;height:181.4px;background:#454545;"></div>
<div class="a" style="left:468.9px;top:469.6px;width:1.3px;height:181.4px;background:#454545;"></div>
<div class="a" style="left:956.3px;top:469.6px;width:1.3px;height:181.4px;background:#454545;"></div>
<div class="a" style="left:1026px;top:469.6px;width:1.3px;height:181.4px;background:#454545;"></div>
<div class="a" style="left:986px;top:497.5px;width:10px;height:10px;background:transparent;border:1px solid #5c5c5c;box-sizing:border-box;"></div>
<div class="a" style="left:986px;top:516.5px;width:10px;height:10px;background:transparent;border:1px solid #5c5c5c;box-sizing:border-box;"></div>
<div class="a" style="left:986px;top:535.5px;width:10px;height:10px;background:transparent;border:1px solid #5c5c5c;box-sizing:border-box;"></div>
<div class="a" style="left:986px;top:554.5px;width:10px;height:10px;background:transparent;border:1px solid #5c5c5c;box-sizing:border-box;"></div>
<div class="a" style="left:986px;top:573.5px;width:10px;height:10px;background:transparent;border:1px solid #5c5c5c;box-sizing:border-box;"></div>
<div class="a" style="left:986px;top:592.5px;width:10px;height:10px;background:transparent;border:1px solid #5c5c5c;box-sizing:border-box;"></div>
<div class="a" style="left:986px;top:611.5px;width:10px;height:10px;background:transparent;border:1px solid #5c5c5c;box-sizing:border-box;"></div>
<div class="a" style="left:986px;top:630.5px;width:10px;height:10px;background:transparent;border:1px solid #5c5c5c;box-sizing:border-box;"></div>
<div class="a" style="left:986px;top:649.5px;width:10px;height:10px;background:transparent;border:1px solid #5c5c5c;box-sizing:border-box;"></div>
<div class="a" style="left:470px;top:493px;width:486.5px;height:20px;background:transparent;border:2px solid #1979d4;box-sizing:border-box;"></div>
<div class="a" style="left:0px;top:650.5px;width:1083px;height:23px;background:#4f4f4f;"></div>
<span class="t " style="left:-6.89px;top:2.53px;font-size:12px;line-height:14px;color:#e4e4e4;transform:scaleX(0.9500);">C signals)</span>
<span class="t " style="left:0.15px;top:19.53px;font-size:12px;line-height:14px;color:#e4e4e4;transform:scaleX(0.9500);">supply)</span>
<span class="t " style="left:-6.71px;top:53.73px;font-size:12px;line-height:14px;color:#e4e4e4;transform:scaleX(0.9500);">ontrol)</span>
<span class="t " style="left:3.60px;top:122.43px;font-size:12px;line-height:14px;color:#e4e4e4;transform:scaleX(0.9620);">enclosure)</span>
<span class="t " style="left:3.60px;top:138.53px;font-size:12px;line-height:14px;color:#e4e4e4;transform:scaleX(1.0025);">control panel)</span>
<span class="t " style="left:-2.36px;top:155.53px;font-size:12px;line-height:14px;color:#e4e4e4;transform:scaleX(0.9500);">Transport)</span>
<span class="t " style="left:-0.80px;top:189.53px;font-size:12px;line-height:14px;color:#e4e4e4;transform:scaleX(0.9712);">engineering schematic)</span>
<span class="t " style="left:-0.20px;top:206.53px;font-size:12px;line-height:14px;color:#f0f0f0;transform:scaleX(0.9941);font-weight:bold;">ontrol</span>
<span class="t " style="left:-30.33px;top:261.03px;font-size:12px;line-height:14px;color:#e4e4e4;transform:scaleX(0.9600);">Sample_Project</span>
<span class="t " style="left:176.60px;top:416.83px;font-size:12px;line-height:14px;color:#ececec;transform:scaleX(0.8873);">RX: 61.97 RY: 65.10</span>
<span class="t " style="left:-5.68px;top:450.03px;font-size:12px;line-height:14px;color:#0ea4ec;transform:scaleX(0.9700);">Sample_Project</span>
<span class="t " style="left:-0.64px;top:475.03px;font-size:12px;line-height:14px;color:#e6e6e6;transform:scaleX(0.9600);">r</span>
<span class="t " style="left:13.20px;top:475.03px;font-size:12px;line-height:14px;color:#e6e6e6;transform:scaleX(0.9275);">Page</span>
<span class="t " style="left:125.30px;top:475.03px;font-size:12px;line-height:14px;color:#e6e6e6;transform:scaleX(0.9595);">Layout space</span>
<span class="t " style="left:206.30px;top:475.03px;font-size:12px;line-height:14px;color:#e6e6e6;transform:scaleX(0.7812);">DT</span>
<span class="t " style="left:474.30px;top:475.03px;font-size:12px;line-height:14px;color:#e6e6e6;transform:scaleX(0.9387);">Message text</span>
<span class="t " style="left:1067.60px;top:475.03px;font-size:12px;line-height:14px;color:#e6e6e6;transform:scaleX(0.9700);">ted</span>
<span class="t " style="left:12.50px;top:496.23px;font-size:12px;line-height:14px;color:#f0f0f0;transform:scaleX(0.9453);">=K1+B1.X1&amp;EFA1/1</span>
<span class="t " style="left:205.30px;top:496.23px;font-size:12px;line-height:14px;color:#f0f0f0;transform:scaleX(0.9198);">=K1+B1.X1-KE1</span>
<span class="t " style="left:472.60px;top:496.23px;font-size:12px;line-height:14px;color:#f0f0f0;transform:scaleX(0.9641);">The PLC card name &#x27;&quot;&quot;&#x27; is already being used at a rack or a CPU</span>
<span class="t " style="left:1030.40px;top:496.23px;font-size:12px;line-height:14px;color:#f0f0f0;transform:scaleX(0.9621);">de.eplan</span>
<span class="t " style="left:12.50px;top:515.23px;font-size:12px;line-height:14px;color:#f0f0f0;transform:scaleX(0.9453);">=K1+B2.X1&amp;EFA1/1</span>
<span class="t " style="left:205.30px;top:515.23px;font-size:12px;line-height:14px;color:#f0f0f0;transform:scaleX(0.9198);">=K1+B2.X1-KE1</span>
<span class="t " style="left:472.60px;top:515.23px;font-size:12px;line-height:14px;color:#f0f0f0;transform:scaleX(0.9641);">The PLC card name &#x27;&quot;&quot;&#x27; is already being used at a rack or a CPU</span>
<span class="t " style="left:1030.40px;top:515.23px;font-size:12px;line-height:14px;color:#f0f0f0;transform:scaleX(0.9621);">de.eplan</span>
<span class="t " style="left:12.50px;top:534.23px;font-size:12px;line-height:14px;color:#f0f0f0;transform:scaleX(0.9453);">=K1+B3.X1&amp;EFA1/1</span>
<span class="t " style="left:205.30px;top:534.23px;font-size:12px;line-height:14px;color:#f0f0f0;transform:scaleX(0.9198);">=K1+B3.X1-KE1</span>
<span class="t " style="left:472.60px;top:534.23px;font-size:12px;line-height:14px;color:#f0f0f0;transform:scaleX(0.9641);">The PLC card name &#x27;&quot;&quot;&#x27; is already being used at a rack or a CPU</span>
<span class="t " style="left:1030.40px;top:534.23px;font-size:12px;line-height:14px;color:#f0f0f0;transform:scaleX(0.9621);">de.eplan</span>
<span class="t " style="left:12.50px;top:553.23px;font-size:12px;line-height:14px;color:#f0f0f0;transform:scaleX(0.9749);">=F+A2&amp;EFA1/2</span>
<span class="t " style="left:205.30px;top:553.23px;font-size:12px;line-height:14px;color:#f0f0f0;transform:scaleX(0.9489);">=F+A2-KE2</span>
<span class="t " style="left:472.60px;top:553.23px;font-size:12px;line-height:14px;color:#f0f0f0;transform:scaleX(0.9782);">PLC card name &#x27;&quot;&quot;&#x27; assigned several times within a rack</span>
<span class="t " style="left:1030.40px;top:553.23px;font-size:12px;line-height:14px;color:#f0f0f0;transform:scaleX(0.9621);">de.eplan</span>
<span class="t " style="left:12.50px;top:572.23px;font-size:12px;line-height:14px;color:#f0f0f0;transform:scaleX(0.9749);">=F+A2&amp;EFA1/3</span>
<span class="t " style="left:205.30px;top:572.23px;font-size:12px;line-height:14px;color:#f0f0f0;transform:scaleX(0.9489);">=F+A2-KE3</span>
<span class="t " style="left:472.60px;top:572.23px;font-size:12px;line-height:14px;color:#f0f0f0;transform:scaleX(0.9782);">PLC card name &#x27;&quot;&quot;&#x27; assigned several times within a rack</span>
<span class="t " style="left:1030.40px;top:572.23px;font-size:12px;line-height:14px;color:#f0f0f0;transform:scaleX(0.9621);">de.eplan</span>
<span class="t " style="left:12.50px;top:591.23px;font-size:12px;line-height:14px;color:#f0f0f0;transform:scaleX(0.9749);">=F+A2&amp;EFA1/4</span>
<span class="t " style="left:205.30px;top:591.23px;font-size:12px;line-height:14px;color:#f0f0f0;transform:scaleX(0.9489);">=F+A2-KE4</span>
<span class="t " style="left:472.60px;top:591.23px;font-size:12px;line-height:14px;color:#f0f0f0;transform:scaleX(0.9782);">PLC card name &#x27;&quot;&quot;&#x27; assigned several times within a rack</span>
<span class="t " style="left:1030.40px;top:591.23px;font-size:12px;line-height:14px;color:#f0f0f0;transform:scaleX(0.9621);">de.eplan</span>
<span class="t " style="left:12.50px;top:610.23px;font-size:12px;line-height:14px;color:#f0f0f0;transform:scaleX(0.9721);">=K1+A2&amp;EFA1/2</span>
<span class="t " style="left:205.30px;top:610.23px;font-size:12px;line-height:14px;color:#f0f0f0;transform:scaleX(0.9477);">=K1+A2-KE2</span>
<span class="t " style="left:472.60px;top:610.23px;font-size:12px;line-height:14px;color:#f0f0f0;transform:scaleX(0.9782);">PLC card name &#x27;&quot;&quot;&#x27; assigned several times within a rack</span>
<span class="t " style="left:1030.40px;top:610.23px;font-size:12px;line-height:14px;color:#f0f0f0;transform:scaleX(0.9621);">de.eplan</span>
<span class="t " style="left:12.50px;top:629.23px;font-size:12px;line-height:14px;color:#f0f0f0;transform:scaleX(0.9721);">=K1+A2&amp;EFA1/3</span>
<span class="t " style="left:205.30px;top:629.23px;font-size:12px;line-height:14px;color:#f0f0f0;transform:scaleX(0.9477);">=K1+A2-KE3</span>
<span class="t " style="left:472.60px;top:629.23px;font-size:12px;line-height:14px;color:#f0f0f0;transform:scaleX(0.9782);">PLC card name &#x27;&quot;&quot;&#x27; assigned several times within a rack</span>
<span class="t " style="left:1030.40px;top:629.23px;font-size:12px;line-height:14px;color:#f0f0f0;transform:scaleX(0.9621);">de.eplan</span>
<span class="t " style="left:12.50px;top:648.23px;font-size:12px;line-height:14px;color:#f0f0f0;transform:scaleX(0.9721);">=K1+A2&amp;EFA1/4</span>
<span class="t " style="left:205.30px;top:648.23px;font-size:12px;line-height:14px;color:#f0f0f0;transform:scaleX(0.9477);">=K1+A2-KE4</span>
<span class="t " style="left:472.60px;top:648.23px;font-size:12px;line-height:14px;color:#f0f0f0;transform:scaleX(0.9782);">PLC card name &#x27;&quot;&quot;&#x27; assigned several times within a rack</span>
<span class="t " style="left:1030.40px;top:648.23px;font-size:12px;line-height:14px;color:#f0f0f0;transform:scaleX(0.9621);">de.eplan</span>
<div class="a" style="left:0;top:650.5px;width:1083px;height:22.5px;background:#4f4f4f"></div>
<div class="a" style="left:818px;top:36px;width:250px;height:468px;background:#343434;border-radius:9px;box-shadow:0 0 0 0.6px #414141, 0 8px 30px rgba(0,0,0,0.34), 0 2px 8px rgba(0,0,0,0.22);"></div>
<div class="a" style="left:824px;top:329px;width:238px;height:22px;background:#525252;"></div>
<div class="a" style="left:853px;top:155px;width:210px;height:1px;background:#4b4b4b;"></div>
<div class="a" style="left:853px;top:229px;width:210px;height:1px;background:#4b4b4b;"></div>
<div class="a" style="left:853px;top:281px;width:210px;height:1px;background:#4b4b4b;"></div>
<div class="a" style="left:853px;top:399px;width:210px;height:1px;background:#4b4b4b;"></div>
<div class="a" style="left:853px;top:429px;width:210px;height:1px;background:#4b4b4b;"></div>
<span class="t m" style="left:852.30px;top:45.03px;font-size:12px;line-height:14px;color:#f4f4f4;transform:scaleX(0.9102);">Freeze panes</span>
<span class="t m" style="left:852.30px;top:67.03px;font-size:12px;line-height:14px;color:#858585;transform:scaleX(0.9477);">Unfreeze panes</span>
<span class="t m" style="left:852.30px;top:89.03px;font-size:12px;line-height:14px;color:#f4f4f4;transform:scaleX(1.0345);">Adjust column width</span>
<span class="t m" style="left:852.30px;top:111.03px;font-size:12px;line-height:14px;color:#f4f4f4;transform:scaleX(1.0339);">Column width automatic</span>
<span class="t m" style="left:852.30px;top:133.03px;font-size:12px;line-height:14px;color:#858585;transform:scaleX(0.9309);">Font size 100%</span>
<span class="t m" style="left:852.30px;top:163.03px;font-size:12px;line-height:14px;color:#f4f4f4;transform:scaleX(0.9816);">Copy</span>
<span class="t m" style="left:1017.50px;top:163.03px;font-size:12px;line-height:14px;color:#f4f4f4;transform:scaleX(1.0045);">Ctrl+C</span>
<span class="t m" style="left:852.30px;top:185.03px;font-size:12px;line-height:14px;color:#f4f4f4;transform:scaleX(0.9645);">Delete display</span>
<span class="t m" style="left:852.30px;top:207.03px;font-size:12px;line-height:14px;color:#f4f4f4;transform:scaleX(0.9445);">Select all</span>
<span class="t m" style="left:852.30px;top:237.03px;font-size:12px;line-height:14px;color:#f4f4f4;transform:scaleX(0.9787);">Check project...</span>
<span class="t m" style="left:986.50px;top:237.03px;font-size:12px;line-height:14px;color:#f4f4f4;transform:scaleX(1.0123);">Ctrl+Shift+P</span>
<span class="t m" style="left:852.30px;top:259.03px;font-size:12px;line-height:14px;color:#f4f4f4;transform:scaleX(0.9813);">Check only completed messages</span>
<span class="t m" style="left:852.30px;top:289.03px;font-size:12px;line-height:14px;color:#f4f4f4;transform:scaleX(0.9693);">Go to (cross-referenced)...</span>
<span class="t m" style="left:852.30px;top:311.03px;font-size:12px;line-height:14px;color:#f4f4f4;transform:scaleX(0.9763);">Go to (all representation types)...</span>
<span class="t m" style="left:852.30px;top:333.03px;font-size:12px;line-height:14px;color:#f4f4f4;transform:scaleX(0.9957);">Go to (graphic)</span>
<span class="t m" style="left:852.30px;top:355.03px;font-size:12px;line-height:14px;color:#858585;transform:scaleX(0.9935);">Go to (2nd coordinate)</span>
<span class="t m" style="left:852.30px;top:377.03px;font-size:12px;line-height:14px;color:#f4f4f4;transform:scaleX(0.9740);">Synchronize selection</span>
<span class="t m" style="left:1019.00px;top:377.03px;font-size:12px;line-height:14px;color:#f4f4f4;transform:scaleX(0.9796);">Ctrl+S</span>
<span class="t m" style="left:852.30px;top:407.03px;font-size:12px;line-height:14px;color:#f4f4f4;transform:scaleX(0.9902);">Configure representation...</span>
<span class="t m" style="left:852.30px;top:437.03px;font-size:12px;line-height:14px;color:#f4f4f4;transform:scaleX(0.9885);">Edit in table</span>
<span class="t m" style="left:852.30px;top:459.03px;font-size:12px;line-height:14px;color:#f4f4f4;transform:scaleX(0.9505);">Properties...</span>
<span class="t m" style="left:852.30px;top:481.03px;font-size:12px;line-height:14px;color:#f4f4f4;transform:scaleX(0.9774);">Properties (global)...</span>
<svg id="icons" width="1083" height="673" viewBox="0 0 1083 673"><g fill="none" stroke="#f2f2f2" stroke-width="1.1"><path d="M832 174 H826.6 V162.7 H831.6 L834.3 165.4 V166"/><path d="M831.4 162.9 V165.6 H834.1" stroke-width="0.8"/><path d="M828.2 165.6 h2.6 M828.2 167.9 h3.2 M828.2 170.2 h3.2 M828.2 172.3 h3.2" stroke-width="0.9"/></g>
<g fill="#343434" stroke="#1ba1e2" stroke-width="1.1"><path d="M833 166.6 H838.6 L841.8 169.8 V177 H833 Z"/><path d="M838.4 166.9 V170 H841.5" stroke-width="0.8" fill="none"/><path d="M835 172.2 h4.8 M835 174.5 h4.8" stroke-width="0.9"/></g>
<path d="M831.1 236 L836.4 245.3 H825.8 Z" fill="#f07f1e" stroke="#f07f1e" stroke-width="0.6" stroke-linejoin="round"/>
<path d="M831.1 239.2 v3.1 M831.1 243.3 v1" stroke="#3a2a1a" stroke-width="1.2" fill="none"/>
<path d="M832.9 248.6 l3.3 2.5 l5.7 -5.9" stroke="#3cab38" stroke-width="1.2" fill="none"/>
<ellipse cx="828.3" cy="294.2" rx="2.4" ry="3.9" fill="#e2e2e2"/><ellipse cx="828.3" cy="300.6" rx="2.2" ry="1.8" fill="#e2e2e2"/><ellipse cx="837.4" cy="291.9" rx="2.5" ry="3.9" fill="#e2e2e2"/>
<rect x="834.3" y="297.2" width="7" height="5.9" fill="#3b8c7d" stroke="#e6e6e6" stroke-width="0.9" stroke-dasharray="1 1"/>
<ellipse cx="828.3" cy="316.2" rx="2.4" ry="3.9" fill="#e2e2e2"/><ellipse cx="828.3" cy="322.6" rx="2.2" ry="1.8" fill="#e2e2e2"/><ellipse cx="837.4" cy="313.9" rx="2.5" ry="3.9" fill="#e2e2e2"/>
<rect x="834.6" y="317" width="7" height="8.8" fill="#343434" stroke="#ececec" stroke-width="1"/>
<path d="M834.6 319.3 h7" stroke="#ececec" stroke-width="1"/>
<rect x="836.2" y="320.9" width="1.6" height="1.4" fill="#ececec"/><rect x="838.6" y="320.9" width="1.8" height="1.4" fill="#ececec"/><rect x="836.2" y="323.1" width="1.6" height="1.4" fill="#ececec"/><rect x="838.6" y="323.1" width="1.8" height="1.4" fill="#ececec"/>
<g fill="none" stroke="#f0f0f0" stroke-width="1.15"><path d="M827.6 382.3 A6.7 6.7 0 0 1 840.6 382"/><path d="M826.3 377.6 V382.5 H831.1"/><path d="M840.6 386.3 A6.7 6.7 0 0 1 827.6 386.6"/><path d="M842 391.3 V386.3 H837.2"/></g>
<rect x="826.9" y="436.2" width="13.3" height="14.6" fill="#ececec"/>
<rect x="826.9" y="436.2" width="13.3" height="2.4" fill="#bcc6d8"/>
<rect x="828.3" y="439.9" width="2.4" height="2.2" fill="#2c2c2c"/>
<rect x="832.4" y="439.9" width="2.4" height="2.2" fill="#2c2c2c"/>
<rect x="836.5" y="439.9" width="2.4" height="2.2" fill="#2c2c2c"/>
<rect x="828.3" y="443.6" width="2.4" height="2.2" fill="#2c2c2c"/>
<rect x="832.4" y="443.6" width="2.4" height="2.2" fill="#2c2c2c"/>
<rect x="836.5" y="443.6" width="2.4" height="2.2" fill="#2c2c2c"/>
<rect x="828.3" y="447.3" width="2.4" height="2.2" fill="#2c2c2c"/>
<rect x="832.4" y="447.3" width="2.4" height="2.2" fill="#2c2c2c"/>
<rect x="836.5" y="447.3" width="2.4" height="2.2" fill="#2c2c2c"/>
<path d="M106.2 267.2 H115.3 L110.75 272 Z" fill="#c9c9c9"/>
<g fill="none" stroke="#e0e0e0" stroke-width="1.1"><path d="M127.8 265 H131.8 M128.4 265 V270.3 M131.1 265 V270.3" /><path d="M126 270.4 H133.2" stroke-width="1.3"/><path d="M129.7 270.6 V273.8"/><path d="M131.6 265 V270" stroke-width="1.5"/></g>
<path d="M145.2 265.3 L151.9 272 M151.9 265.3 L145.2 272" stroke="#e0e0e0" stroke-width="1.3" fill="none"/></svg>
</body></html>
